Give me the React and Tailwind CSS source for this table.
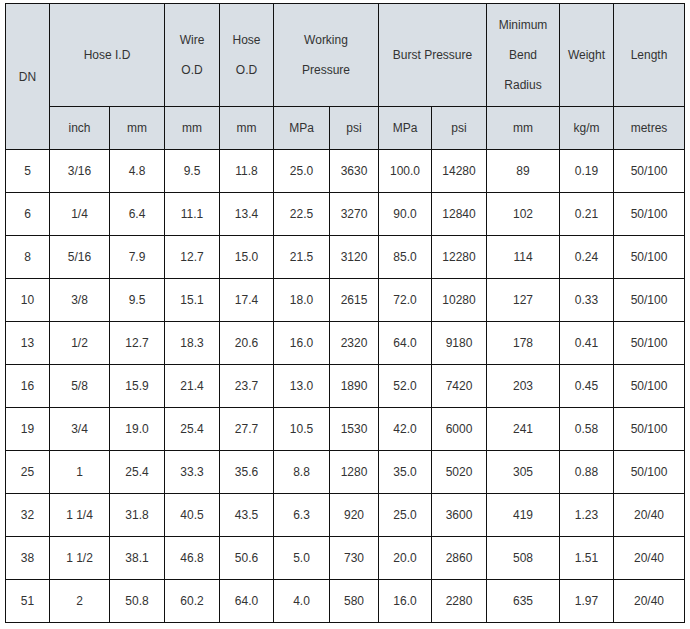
import React from "react";

const rows = [
  ["5", "3/16", "4.8", "9.5", "11.8", "25.0", "3630", "100.0", "14280", "89", "0.19", "50/100"],
  ["6", "1/4", "6.4", "11.1", "13.4", "22.5", "3270", "90.0", "12840", "102", "0.21", "50/100"],
  ["8", "5/16", "7.9", "12.7", "15.0", "21.5", "3120", "85.0", "12280", "114", "0.24", "50/100"],
  ["10", "3/8", "9.5", "15.1", "17.4", "18.0", "2615", "72.0", "10280", "127", "0.33", "50/100"],
  ["13", "1/2", "12.7", "18.3", "20.6", "16.0", "2320", "64.0", "9180", "178", "0.41", "50/100"],
  ["16", "5/8", "15.9", "21.4", "23.7", "13.0", "1890", "52.0", "7420", "203", "0.45", "50/100"],
  ["19", "3/4", "19.0", "25.4", "27.7", "10.5", "1530", "42.0", "6000", "241", "0.58", "50/100"],
  ["25", "1", "25.4", "33.3", "35.6", "8.8", "1280", "35.0", "5020", "305", "0.88", "50/100"],
  ["32", "1 1/4", "31.8", "40.5", "43.5", "6.3", "920", "25.0", "3600", "419", "1.23", "20/40"],
  ["38", "1 1/2", "38.1", "46.8", "50.6", "5.0", "730", "20.0", "2860", "508", "1.51", "20/40"],
  ["51", "2", "50.8", "60.2", "64.0", "4.0", "580", "16.0", "2280", "635", "1.97", "20/40"],
];

const sub = ["inch", "mm", "mm", "mm", "MPa", "psi", "MPa", "psi", "mm", "kg/m", "metres"];

const H = "bg-[#d9dfe5] flex flex-col items-center justify-center text-center leading-[30px]";

export default function App() {
  return (
    <div className="w-[690px] h-[629px] bg-white pl-[5px] pt-[3px]" style={{ fontFamily: '"Liberation Sans", Arial, sans-serif' }}>
      <div className="inline-grid bg-[#111] p-px gap-px text-[12px] text-[#333] grid-cols-[43px_59px_54px_54px_53px_55px_48px_52px_54px_72px_53px_70px] grid-rows-[102px_42px_repeat(11,42px)]">
        <div className={`${H} row-span-2`}>DN</div>
        <div className={`${H} col-span-2`}>Hose I.D</div>
        <div className={H}><span>Wire</span><span>O.D</span></div>
        <div className={H}><span>Hose</span><span>O.D</span></div>
        <div className={`${H} col-span-2`}><span>Working</span><span>Pressure</span></div>
        <div className={`${H} col-span-2`}>Burst Pressure</div>
        <div className={H}><span>Minimum</span><span>Bend</span><span>Radius</span></div>
        <div className={H}>Weight</div>
        <div className={H}>Length</div>
        {sub.map((s, i) => (
          <div key={"s" + i} className={H}>{s}</div>
        ))}
        {rows.map((r, ri) =>
          r.map((c, ci) => (
            <div key={ri + "-" + ci} className="bg-white flex items-center justify-center">
              {c}
            </div>
          ))
        )}
      </div>
    </div>
  );
}
